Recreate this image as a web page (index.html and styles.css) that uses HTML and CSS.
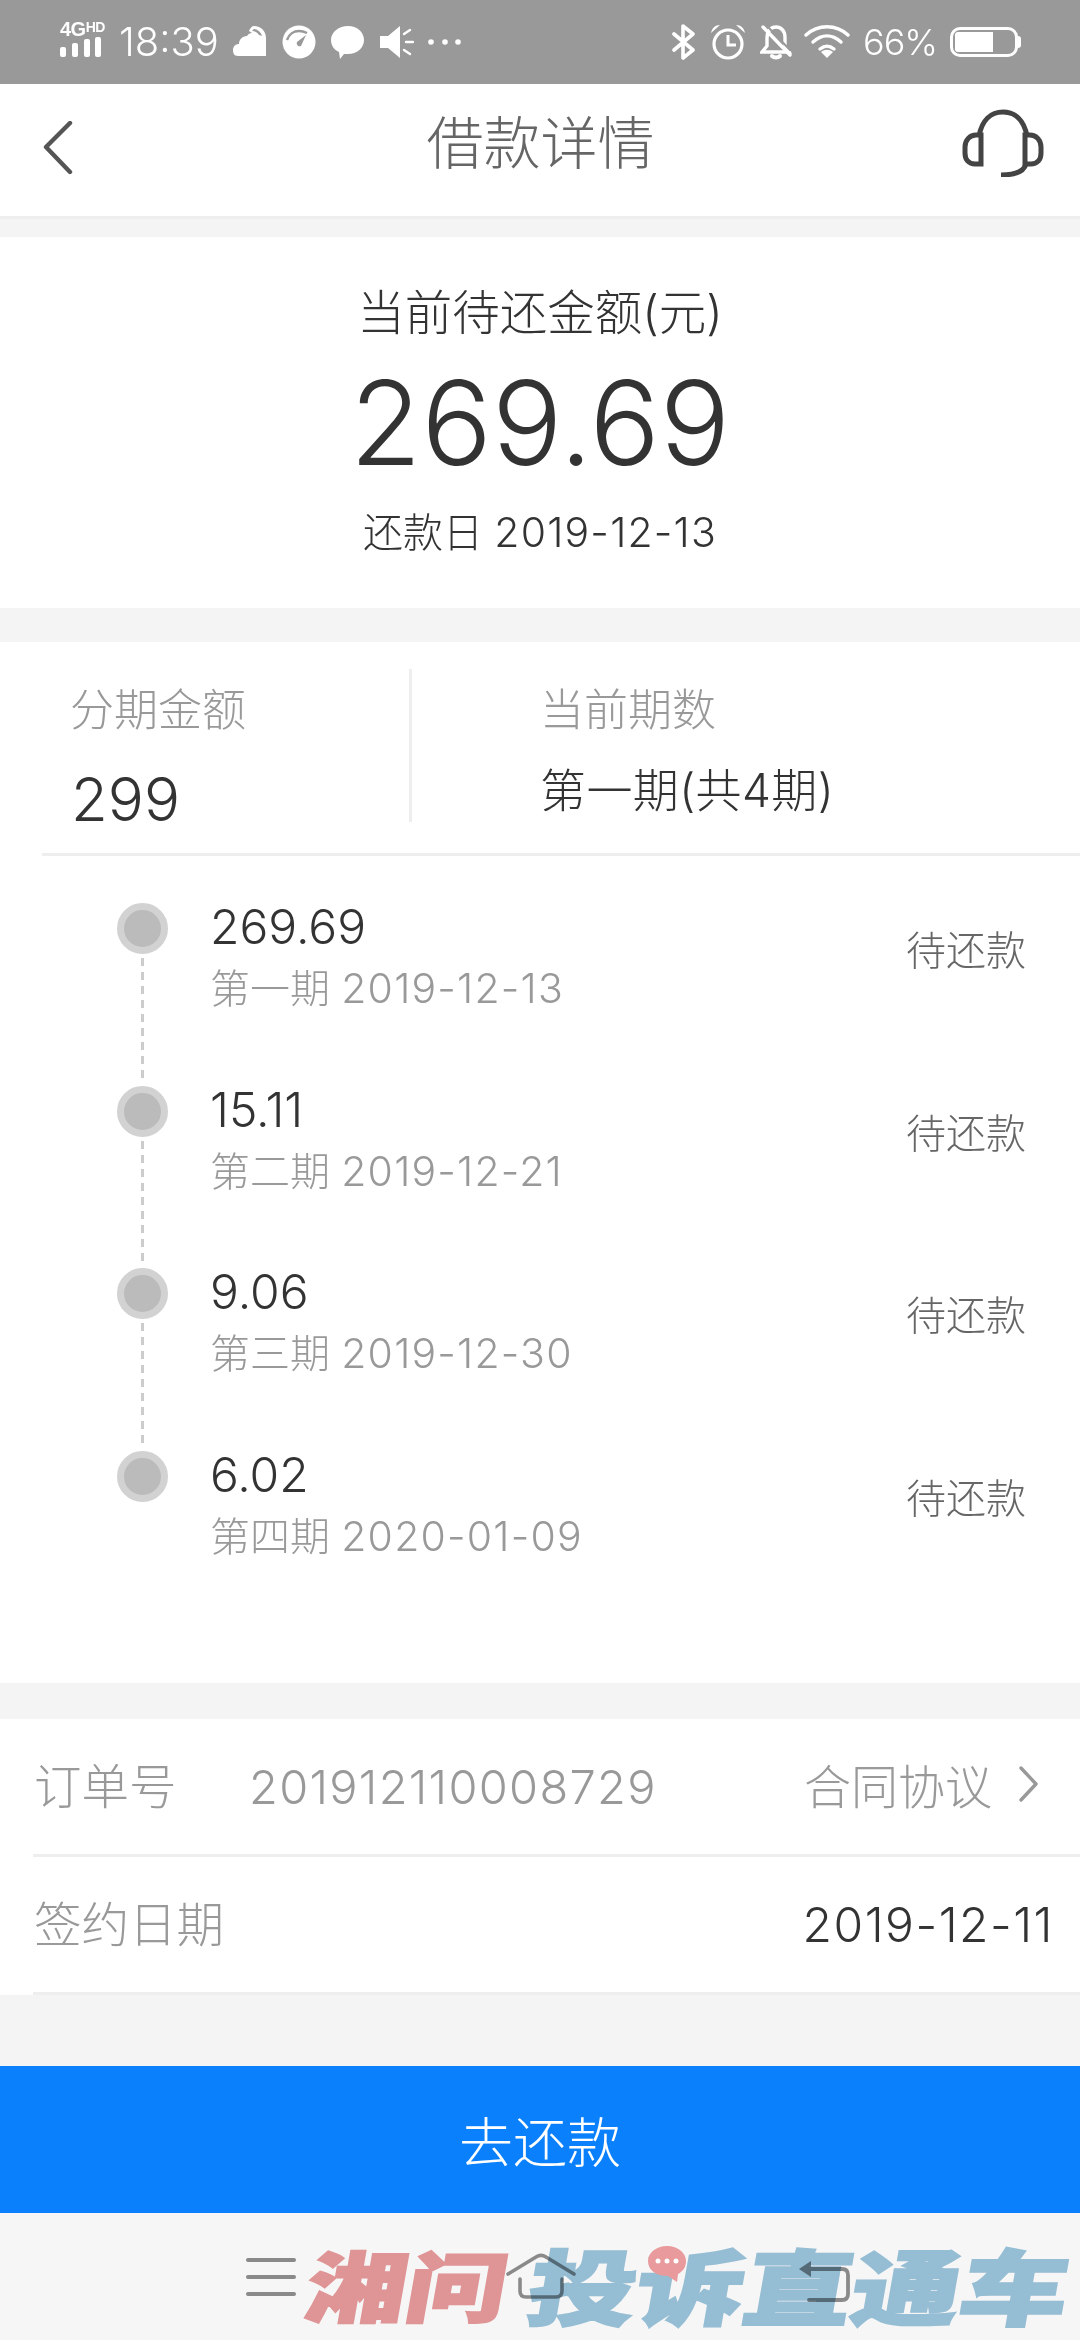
FILE: index.html
```html
<!DOCTYPE html>
<html lang="zh-CN">
<head>
<meta charset="utf-8">
<title>借款详情</title>
<link rel="stylesheet" href="styles.css">
</head>
<body>
<div class="page">
  <div class="statusbar">
    <div class="status-left">
      <div class="signal">
        <div class="net"><span>4G</span><span class="hd">HD</span></div>
        <svg class="bars" width="42" height="21" viewBox="0 0 42 21"><rect x="0" y="10" width="6" height="10" rx="2"/><rect x="12" y="6" width="6" height="14" rx="2"/><rect x="24" y="2" width="6" height="18" rx="2"/><rect x="35" y="0" width="6" height="20" rx="2"/></svg>
      </div>
      <span class="time">18:39</span>
      <svg class="si" width="34" height="34" viewBox="0 0 34 34"><path d="M21 1c7 0 12 5 12 12v18H5C1 31 0 28 0 25c0-4 3-6 6-6 0-4 3-8 8-8 1-2 3-3 5-3l-3-2c1-3 3-5 5-5z M19 6c3 0 5 1 7 4l3 1c-1-4-5-7-8-7z"/></svg>
      <svg class="si" width="34" height="34" viewBox="0 0 34 34"><circle cx="17" cy="17" r="16.5"/><path d="M5 15C7 9 12 6 17 6c3 0 6 1 8 2" fill="none" stroke="#999" stroke-width="2.4"/><path d="M24 10l-9 7a3 3 0 0 0 4 4z" fill="#999"/></svg>
      <svg class="si" width="34" height="34" viewBox="0 0 34 34"><path d="M17 1c9 0 16 6 16 14s-7 14-16 14c-2 0-3 0-4 0l-4 5-1-7C3 25 0 20 0 15 0 7 8 1 17 1z"/></svg>
      <svg class="si" width="34" height="34" viewBox="0 0 34 34"><path d="M0 11h8l12-10v32L8 23H0z"/><path d="M24 9l6-4M26 17h7M24 25l6 4" fill="none" stroke="#fff" stroke-width="2.4" stroke-linecap="round"/></svg>
      <svg class="dots" width="34" height="34" viewBox="0 0 34 34"><circle cx="3" cy="17" r="2.8"/><circle cx="17" cy="17" r="2.8"/><circle cx="30" cy="17" r="2.8"/></svg>
    </div>
    <div class="status-right">
      <svg class="sr sr-bt" width="24" height="36" viewBox="0 0 24 36" fill="none" stroke="#fff" stroke-width="3.6" stroke-linejoin="round" stroke-linecap="round"><path d="M2 10l19 16-10 8V2l10 8L2 26"/></svg>
      <svg class="sr sr-alarm" width="36" height="36" viewBox="0 0 36 36"><circle cx="18" cy="20" r="14" fill="none" stroke="#fff" stroke-width="3.2"/><path d="M18 11v10h8" fill="none" stroke="#fff" stroke-width="3"/><path d="M1 9C2 4 5 1 10 1zM35 9c-1-5-4-8-9-8z" fill="#fff"/></svg>
      <svg class="sr sr-bell" width="32" height="36" viewBox="0 0 32 36" fill="none" stroke="#fff" stroke-width="3.4" stroke-linecap="round"><path d="M7 14c0-7 4-11 9-11s9 4 9 10v9l4 6H2l5-6z"/><path d="M12 32c2 2 6 2 8 0" stroke-width="4"/><path d="M3 3l27 28"/><path d="M9 4l21 22" stroke="#999" stroke-width="2"/></svg>
      <svg class="sr sr-wifi" width="46" height="36" viewBox="0 0 46 36" fill="none" stroke="#fff" stroke-width="3.4" stroke-linecap="round"><path d="M2 11c12-11 30-11 42 0"/><path d="M9 18c9-8 19-8 28 0"/><path d="M16 25c5-4 9-4 14 0" /><path d="M17 28c4-3 8-3 12 0l-6 6z" fill="#fff" stroke="none"/></svg>
      <span class="pct">66%</span>
      <div class="battery"><div class="battery-body"><div class="battery-fill"></div></div><div class="battery-tip"></div></div>
    </div>
  </div>

  <header class="appbar">
    <svg class="back" width="30" height="54" viewBox="0 0 30 54" fill="none" stroke="#555" stroke-width="4.4" stroke-linecap="round" stroke-linejoin="round"><path d="M27 2L3 26l24 25"/></svg>
    <h1 class="title">借款详情</h1>
    <svg class="headset" width="82" height="68" viewBox="0 0 82 68" fill="none" stroke="#444" stroke-width="5"><path d="M17 27C20 11 29 3 41 3s21 8 24 24"/><path d="M19 26h-5C8 26 3 31 3 38v6c0 7 4 11 10 11h6z"/><path d="M63 26h5c6 0 11 5 11 12v6c0 7-4 11-10 11h-6z"/><path d="M64 55C62 62 54 66 39 66"/></svg>
  </header>

  <section class="summary">
    <div class="summary-label">当前待还金额(元)</div>
    <div class="summary-amount">269.69</div>
    <div class="summary-date">还款日 <span class="num">2019-12-13</span></div>
  </section>

  <section class="plan">
    <div class="plan-head">
      <div class="plan-col plan-col-left">
        <div class="plan-label">分期金额</div>
        <div class="plan-total">299</div>
      </div>
      <div class="plan-col plan-col-right">
        <div class="plan-label">当前期数</div>
        <div class="plan-current">第一期(共4期)</div>
      </div>
    </div>
    <ul class="timeline">
      <li class="step">
        <div class="rail"><div class="dot"></div><div class="dash"></div></div>
        <div class="step-text"><div class="step-amount">269.69</div><div class="step-sub">第一期 <span class="num">2019-12-13</span></div></div>
        <div class="step-status">待还款</div>
      </li>
      <li class="step">
        <div class="rail"><div class="dot"></div><div class="dash"></div></div>
        <div class="step-text"><div class="step-amount">15.11</div><div class="step-sub">第二期 <span class="num">2019-12-21</span></div></div>
        <div class="step-status">待还款</div>
      </li>
      <li class="step">
        <div class="rail"><div class="dot"></div><div class="dash"></div></div>
        <div class="step-text"><div class="step-amount">9.06</div><div class="step-sub">第三期 <span class="num">2019-12-30</span></div></div>
        <div class="step-status">待还款</div>
      </li>
      <li class="step">
        <div class="rail"><div class="dot"></div></div>
        <div class="step-text"><div class="step-amount">6.02</div><div class="step-sub">第四期 <span class="num">2020-01-09</span></div></div>
        <div class="step-status">待还款</div>
      </li>
    </ul>
  </section>

  <section class="info">
    <div class="info-row">
      <span class="info-key info-key-order">订单号</span>
      <span class="info-order">201912110008729</span>
      <span class="info-link">合同协议</span>
      <svg class="info-chevron" width="20" height="36" viewBox="0 0 20 36" fill="none" stroke="#999" stroke-width="3.4" stroke-linecap="round" stroke-linejoin="round"><path d="M3 2l15 16L3 34"/></svg>
    </div>
    <div class="info-row">
      <span class="info-key">签约日期</span>
      <span class="info-date">2019-12-11</span>
    </div>
  </section>

  <div class="spacer"></div>
  <button class="pay">去还款</button>

  <nav class="navbar">
    <svg class="nav-icon nav-menu" width="50" height="38" viewBox="0 0 50 38" fill="#8a8a8a"><rect y="0" width="50" height="4" rx="2"/><rect y="17" width="50" height="4" rx="2"/><rect y="34" width="50" height="4" rx="2"/></svg>
    <svg class="nav-icon nav-home" width="70" height="46" viewBox="0 0 70 46" fill="none" stroke="#8a8a8a" stroke-width="3.6" stroke-linecap="round" stroke-linejoin="round"><path d="M2 21L30 4c3-2 7-2 10 0l28 17"/><path d="M14 26v12c0 4 2 6 6 6h30c4 0 6-2 6-6V26"/></svg>
    <svg class="nav-icon nav-back" width="54" height="42" viewBox="0 0 54 42" fill="none" stroke="#8a8a8a" stroke-width="3.8" stroke-linecap="round" stroke-linejoin="round"><path d="M10 9h34c4 0 6 2 6 6v19c0 4-2 6-6 6H11"/><path d="M1 9L13 1v16z" fill="#8a8a8a" stroke="none"/></svg>
    <div class="mark">
      <span class="mark-red">湘问</span><span class="mark-blue">投诉直通车</span>
    </div>
    <svg class="mark-bubble" width="40" height="36" viewBox="0 0 40 36"><path d="M20 0c11 0 19 7 19 15 0 7-4 11-8 13l-1 8-9-6C9 30 1 24 1 15 1 7 9 0 20 0z" fill="#e89a9c"/><circle cx="11" cy="15" r="2.5" fill="#fff"/><circle cx="20" cy="15" r="2.5" fill="#fff"/><circle cx="29" cy="15" r="2.5" fill="#fff"/></svg>
  </nav>
</div>
</body>
</html>
```
FILE: styles.css
```css
* { box-sizing: border-box; }
html, body { margin: 0; padding: 0; }
body { width: 1080px; height: 2340px; overflow: hidden; background: #f4f4f4; font-family: Inter, "Noto Sans CJK SC", sans-serif; font-weight: 300; color: #333; }
.page { display: flex; flex-direction: column; height: 2340px; }

.statusbar { height: 84px; background: #999; display: flex; justify-content: space-between; align-items: center; padding: 0 59px 0 60px; color: #fff; flex: none; }
.status-left, .status-right { display: flex; align-items: center; }
.signal { width: 46px; height: 36px; display: flex; flex-direction: column; justify-content: space-between; margin-right: 13px; margin-top: -4px; }
.net { display: flex; font-family: "Liberation Sans", sans-serif; font-weight: 700; font-size: 20px; line-height: 15px; letter-spacing: -0.5px; }
.hd { font-size: 14px; line-height: 10px; }
.bars { fill: #fff; display: block; }
.time { font-size: 40px; line-height: 50px; width: 114px; }
.si { fill: #fff; margin-right: 15px; display: block; }
.dots { fill: #fff; margin-left: -1px; display: block; }
.sr { display: block; }
.sr-bt { margin-right: 14px; }
.sr-alarm { margin-right: 14px; }
.sr-bell { margin-right: 12px; }
.sr-wifi { margin-right: 13px; }
.pct { font-size: 36px; letter-spacing: -1px; line-height: 40px; width: 87px; }
.battery { display: flex; align-items: center; }
.battery-body { width: 68px; height: 30px; border: 3px solid #fff; border-radius: 10px; padding: 2px; }
.battery-fill { width: 38px; height: 100%; background: #fff; border-radius: 3px 0 0 3px; }
.battery-tip { width: 3px; height: 12px; background: #fff; border-radius: 0 3px 3px 0; }

.appbar { height: 135px; background: #fff; border-bottom: 3px solid #eee; display: grid; grid-template-columns: 1fr auto 1fr; align-items: center; padding: 0 36px 0 43px; flex: none; }
.back { margin-top: -4px; display: block; }
.title { font-size: 57px; font-weight: 300; color: #666; margin: 0 6px 0 0; line-height: 70px; padding-bottom: 12px; }
.headset { display: block; margin-top: -14px; justify-self: end; }

.summary { margin-top: 18px; height: 371px; background: #fff; padding-top: 46px; text-align: center; flex: none; }
.summary-label { font-size: 47.5px; line-height: 60px; }
.summary-amount { font-size: 117px; line-height: 120px; margin-top: 20px; }
.summary-date { font-size: 40px; line-height: 50px; margin-top: 24px; }
.num { font-size: 41px; letter-spacing: 1.2px; }

.plan { margin-top: 34px; height: 1041px; background: #fff; flex: none; }
.plan-head { margin-left: 42px; height: 214px; border-bottom: 3px solid #eee; padding-top: 27px; display: flex; align-items: flex-start; }
.plan-col { height: 153px; padding-top: 11px; }
.plan-col-left { width: 370px; padding-left: 28px; border-right: 3px solid #eee; }
.plan-col-right { padding-left: 128px; }
.plan-label { font-size: 44px; line-height: 60px; color: #999; }
.plan-total { font-size: 60px; line-height: 60px; margin-top: 29px; margin-left: 1px; }
.plan-current { font-size: 46px; letter-spacing: .4px; line-height: 60px; margin-top: 20px; }

.timeline { list-style: none; margin: 0; padding: 47px 54px 0 117px; }
.step { display: flex; height: 182.7px; }
.rail { width: 51px; display: flex; flex-direction: column; align-items: center; flex: none; }
.dot { width: 51px; height: 51px; border-radius: 50%; background: #bbb; border: 7px solid #d2d2d2; flex: none; }
.dash { flex: 1; width: 3px; margin: 4px 0; background: repeating-linear-gradient(to bottom, #ccc 0 8px, transparent 8px 14px); }
.step-text { margin-left: 42px; flex: 1; margin-top: -1px; }
.step-amount { font-size: 48px; line-height: 50px; }
.step-sub { font-size: 40px; line-height: 50px; margin-top: 11px; color: #999; }
.step-status { font-size: 40px; line-height: 50px; color: #666; margin-top: 23px; }

.info { margin-top: 36px; background: #fff; flex: none; }
.info-row { height: 138px; margin-left: 33px; border-bottom: 3px solid #eee; display: flex; align-items: center; padding: 0 26px 0 1px; }
.info-key { font-size: 47.5px; color: #999; flex: 1; line-height: 60px; }
.info-key-order { flex: none; width: 215px; }
.info-order { font-size: 47px; letter-spacing: 1.3px; color: #999; flex: 1; line-height: 60px; }
.info-link { font-size: 47px; color: #999; line-height: 60px; margin-right: 26px; }
.info-chevron { display: block; margin-right: 16px; margin-top: -6px; }
.info-date { font-size: 48px; letter-spacing: 1.5px; line-height: 60px; color: #333; }

.spacer { flex: 1; }
.pay { height: 147px; width: 100%; border: 0; background: #0a80fd; color: #fff; font-family: inherit; font-size: 54px; font-weight: 300; padding: 0; flex: none; display: block; }

.navbar { height: 127px; background: #f6f6f6; flex: none; position: relative; display: flex; align-items: flex-start; }
.nav-icon { display: block; flex: none; }
.nav-menu { margin: 45px 0 0 246px; }
.nav-home { margin: 40px 0 0 210px; }
.nav-back { margin: 47px 0 0 222px; }
.mark { position: absolute; left: 308px; top: 10px; display: flex; font-family: "Noto Sans CJK SC", sans-serif; font-weight: 900; white-space: nowrap; transform-origin: left center; transform: skewX(-10deg) scaleY(.76); mix-blend-mode: multiply; -webkit-text-stroke: 3px currentColor; }
.mark-red { color: #e89a9c; font-size: 100px; line-height: 120px; }
.mark-blue { color: #9bc4dc; font-size: 108px; line-height: 120px; margin-left: 22px; }
.mark-bubble { position: absolute; left: 647px; top: 33px; }
```
